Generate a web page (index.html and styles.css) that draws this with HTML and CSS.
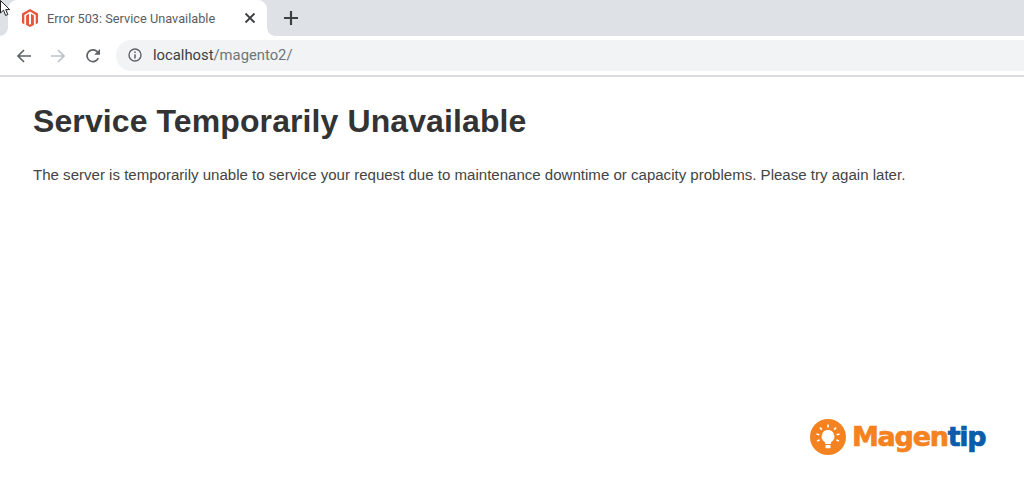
FILE: index.html
```html
<!DOCTYPE html>
<html lang="en">
<head>
<meta charset="utf-8">
<title>Error 503: Service Unavailable</title>
<link rel="stylesheet" href="styles.css">
</head>
<body>
<div class="chrome">
  <div class="tabstrip">
    <div class="tab">
      <svg class="favicon" viewBox="0 0 16 18" width="16" height="18"><path fill="#e8553a" d="M8 0 16 4.600V14L13.700 15.300V5.900L8 2.600 2.300 5.900V15.300L0 14V4.600Z"/><path fill="#e8553a" d="M9 4.700 11.900 6.400V16L8 18 4.100 16V6.400L7 4.700V15.100L8 15.700 9 15.100Z"/></svg>
      <span class="tab-title">Error 503: Service Unavailable</span>
      <svg class="close" viewBox="0 0 12 12" width="12" height="12"><path d="M1.500 1.500 10.500 10.500M10.500 1.500 1.500 10.500" stroke="#3c4043" stroke-width="1.800" fill="none"/></svg>
    </div>
    <svg class="newtab" viewBox="0 0 14 14" width="14" height="14"><path d="M7 0V14M0 7H14" stroke="#3c4043" stroke-width="2.200" fill="none"/></svg>
  </div>
  <div class="toolbar">
    <svg class="nav" viewBox="0 0 16 16" width="16" height="16"><path d="M15 8H2M8 2 2 8l6 6" stroke="#5f6368" stroke-width="1.700" fill="none"/></svg>
    <svg class="nav" viewBox="0 0 16 16" width="16" height="16"><path d="M1 8H14M8 2l6 6-6 6" stroke="#bdc1c6" stroke-width="1.700" fill="none"/></svg>
    <svg class="nav" viewBox="0 0 16 16" width="16" height="16"><path d="M13.300 10.200A5.900 5.900 0 1 1 12.400 3.800L14.600 6" stroke="#5f6368" stroke-width="1.700" fill="none"/><path d="M15 1V6.800H9.200Z" fill="#5f6368"/></svg>
    <div class="omnibox">
      <svg class="info" viewBox="0 0 14 14" width="14" height="14"><circle cx="7" cy="7" r="6" stroke="#5f6368" stroke-width="1.400" fill="none"/><path d="M7 6.200V10.400M7 3.600V5" stroke="#5f6368" stroke-width="1.500" fill="none"/></svg>
      <span class="url"><span class="host">localhost</span>/magento2/</span>
    </div>
  </div>
</div>
<main class="page">
  <h1>Service Temporarily Unavailable</h1>
  <p>The server is temporarily unable to service your request due to maintenance downtime or capacity problems. Please try again later.</p>
</main>
<div class="brand">
  <svg class="bulb" viewBox="0 0 36 36" width="36" height="36">
    <circle cx="18" cy="18" r="18" fill="#f58220"/>
    <path fill="#fff" d="M18 11a6.400 6.400 0 0 0-3.800 11.500c.8.700 1 1.500 1 2.500h5.600c0-1 .2-1.800 1-2.500A6.400 6.400 0 0 0 18 11Z"/>
    <rect x="15.400" y="26" width="5.200" height="3.200" rx="1" fill="#fff"/>
    <path stroke="#fff" stroke-width="1.700" d="M18 5.500V8.500M10 8.500l1.800 2.300M26 8.500l-1.800 2.300M6.500 15l2.800.8M29.500 15l-2.800.8M7 22l2.600-1M29 22l-2.600-1" fill="none"/>
  </svg>
  <span class="wordmark">Magen<span class="tip">tip</span></span>
</div>
<svg class="cursor" viewBox="0 0 11 17" width="11" height="17"><path d="M.5.500V13L3.500 10.200 5.600 15.500 7.800 14.500 5.700 9.600H9.700Z" fill="#fff" stroke="#222" stroke-width="1"/></svg>
</body>
</html>
```
FILE: styles.css
```css
* { box-sizing: border-box; }
html, body { margin: 0; height: 100%; }
body { position: relative; width: 1024px; height: 478px; overflow: hidden; background: #fff; font-family: "Liberation Sans", Arial, sans-serif; }
.chrome { border-bottom: 2px solid #dadce0; height: 77px; }
.tabstrip { display: flex; align-items: center; height: 36px; padding-left: 8px; background: #dee1e6; }
.tab { position: relative; display: flex; align-items: center; width: 259px; height: 36px; background: #fff; border-radius: 9px 9px 0 0; padding: 0 11px 0 14px; }
.tab::before, .tab::after { content: ""; position: absolute; bottom: 0; width: 8px; height: 8px; }
.tab::before { left: -8px; background: radial-gradient(circle at 0 0, #dee1e6 7.500px, #fff 8px); }
.tab::after { right: -8px; background: radial-gradient(circle at 100% 0, #dee1e6 7.500px, #fff 8px); }
.favicon { flex: none; }
.tab-title { margin-left: 9px; flex: 1; font: 12.750px "Roboto", "Liberation Sans", sans-serif; color: #5a5d61; white-space: nowrap; }
.newtab { margin-left: 17px; }
.toolbar { display: flex; align-items: center; height: 39px; padding-left: 16px; background: #fff; }
.nav { margin-right: 18px; flex: none; }
.toolbar .nav:nth-child(2) { margin-right: 19px; }
.toolbar .nav:nth-child(3) { margin-right: 15px; }
.omnibox { display: flex; align-items: center; flex: 1; height: 31px; margin-top: -1px; padding-left: 12px; background: #f1f3f4; border-radius: 16px 0 0 16px; }
.url { margin-left: 11px; font: 14.800px "Roboto", "Liberation Sans", sans-serif; color: #70757a; }
.host { color: #3c4043; }
.page { padding: 25px 0 0 33px; color: #333; }
h1 { margin: 0; font-size: 32px; line-height: 38px; font-weight: 700; letter-spacing: .1px; }
p { margin: 25px 0 0; font-size: 15.050px; line-height: 20px; color: #444; }
.brand { position: absolute; left: 810px; top: 419px; display: flex; align-items: center; gap: 6px; }
.bulb { flex: none; }
.wordmark { font: 700 27px/36px "DejaVu Sans", sans-serif; letter-spacing: -1.250px; color: #f58220; -webkit-text-stroke: .7px currentColor; }
.tip { color: #0b5cab; }
.cursor { position: absolute; left: 0; top: 0; }
```
